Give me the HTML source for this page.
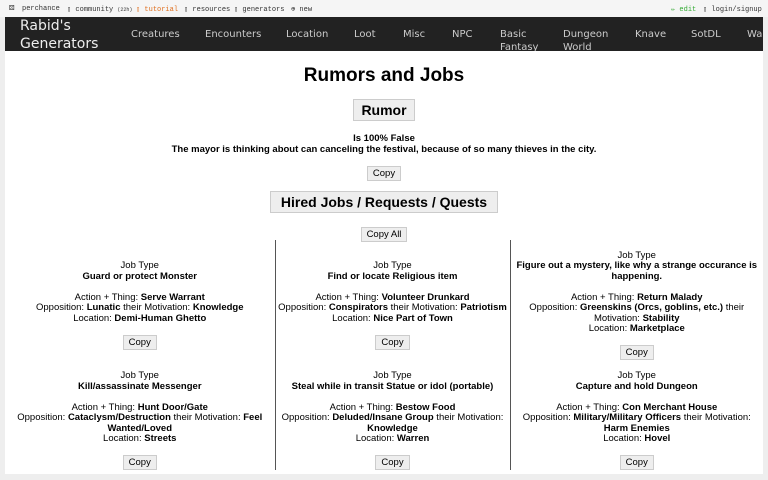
<!DOCTYPE html>
<html><head><style>
*{box-sizing:border-box}
body{margin:0;width:768px;height:480px;background:#eee;font-family:"Liberation Sans",sans-serif;overflow:hidden;position:relative}
#top{position:absolute;left:0;top:0;width:768px;height:17px;background:#f5f5f5;font-family:"Liberation Mono",monospace;font-size:7px;color:#333}
#top span{position:absolute;top:5px}
#nav{position:absolute;left:5px;top:17px;width:758px;height:34px;background:#222;color:#ccc;font-family:"DejaVu Sans",sans-serif;font-size:10px;overflow:hidden}
#nav div{position:absolute;line-height:13px}
#main{position:absolute;left:5px;top:51px;width:758px;height:423px;background:#fff;text-align:center;color:#000}
h1{position:absolute;top:14px;left:0;width:100%;margin:0;font-size:19px;line-height:22px}
.hb{position:absolute;background:#eee;border:1px solid #ccc;font-weight:bold;transform:translateX(-50%)}
.btn{display:inline-block;background:#eee;border:1px solid #ccc;font-size:9.5px;padding:0 5px;height:15px;line-height:13px}
.t{font-size:9.5px;line-height:10.5px}
table{position:absolute;top:189px;left:0;width:758px;border-collapse:collapse}
td{vertical-align:middle;text-align:center;font-size:9.5px;line-height:10.5px;padding:0 2px}
td+td{border-left:1px solid #555}
</style></head><body>
<div id="top">
<span style="left:9px;font-size:9px;top:3px">⚄</span>
<span style="left:22px">perchance</span>
<span style="left:67px">▯ community <small style="font-size:5px">(22h)</small></span>
<span style="left:136px;color:#e07020">▯ tutorial</span>
<span style="left:184px">▯ resources</span>
<span style="left:234px">▯ generators</span>
<span style="left:291px">⊕ new</span>
<span style="left:671px;color:#3a3">✏ edit</span>
<span style="left:703px">▯ login/signup</span>
</div>
<div id="nav">
<div style="left:15px;top:0;font-size:14px;line-height:18px;color:#eee">Rabid's<br>Generators</div>
<div style="left:126px;top:11px">Creatures</div>
<div style="left:200px;top:11px">Encounters</div>
<div style="left:281px;top:11px">Location</div>
<div style="left:349px;top:11px">Loot</div>
<div style="left:398px;top:11px">Misc</div>
<div style="left:447px;top:11px">NPC</div>
<div style="left:495px;top:11px">Basic<br>Fantasy</div>
<div style="left:558px;top:11px">Dungeon<br>World</div>
<div style="left:630px;top:11px">Knave</div>
<div style="left:686px;top:11px">SotDL</div>
<div style="left:742px;top:11px">War</div>
</div>
<div id="main">
<h1>Rumors and Jobs</h1>
<div class="hb" style="left:379px;top:48px;width:62px;height:22px;font-size:14px;line-height:20px">Rumor</div>
<div class="t" style="position:absolute;top:83px;width:100%;font-weight:bold">Is 100% False<br>The mayor is thinking about can canceling the festival, because of so many thieves in the city.</div>
<div style="position:absolute;top:112px;width:100%"><span class="btn">Copy</span></div>
<div class="hb" style="left:379px;top:140px;width:228px;height:22px;font-size:14px;line-height:20px">Hired Jobs / Requests / Quests</div>
<div style="position:absolute;top:173px;width:100%"><span class="btn">Copy All</span></div>
<table>
<tr style="height:131px">
<td style="width:270px">Job Type<br><b>Guard or protect Monster</b><br><br>Action + Thing: <b>Serve Warrant</b><br>Opposition: <b>Lunatic</b> their Motivation: <b>Knowledge</b><br>Location: <b>Demi-Human Ghetto</b><br><br><span class="btn">Copy</span></td>
<td style="width:235px">Job Type<br><b>Find or locate Religious item</b><br><br>Action + Thing: <b>Volunteer Drunkard</b><br>Opposition: <b>Conspirators</b> their Motivation: <b>Patriotism</b><br>Location: <b>Nice Part of Town</b><br><br><span class="btn">Copy</span></td>
<td>Job Type<br><b>Figure out a mystery, like why a strange occurance is happening.</b><br><br>Action + Thing: <b>Return Malady</b><br>Opposition: <b>Greenskins (Orcs, goblins, etc.)</b> their Motivation: <b>Stability</b><br>Location: <b>Marketplace</b><br><br><span class="btn">Copy</span></td>
</tr>
<tr style="height:97px">
<td>Job Type<br><b>Kill/assassinate Messenger</b><br><br>Action + Thing: <b>Hunt Door/Gate</b><br>Opposition: <b>Cataclysm/Destruction</b> their Motivation: <b>Feel Wanted/Loved</b><br>Location: <b>Streets</b><br><br><span class="btn">Copy</span></td>
<td>Job Type<br><b>Steal while in transit Statue or idol (portable)</b><br><br>Action + Thing: <b>Bestow Food</b><br>Opposition: <b>Deluded/Insane Group</b> their Motivation: <b>Knowledge</b><br>Location: <b>Warren</b><br><br><span class="btn">Copy</span></td>
<td>Job Type<br><b>Capture and hold Dungeon</b><br><br>Action + Thing: <b>Con Merchant House</b><br>Opposition: <b>Military/Military Officers</b> their Motivation: <b>Harm Enemies</b><br>Location: <b>Hovel</b><br><br><span class="btn">Copy</span></td>
</tr>
</table>
</div>
</body></html>
